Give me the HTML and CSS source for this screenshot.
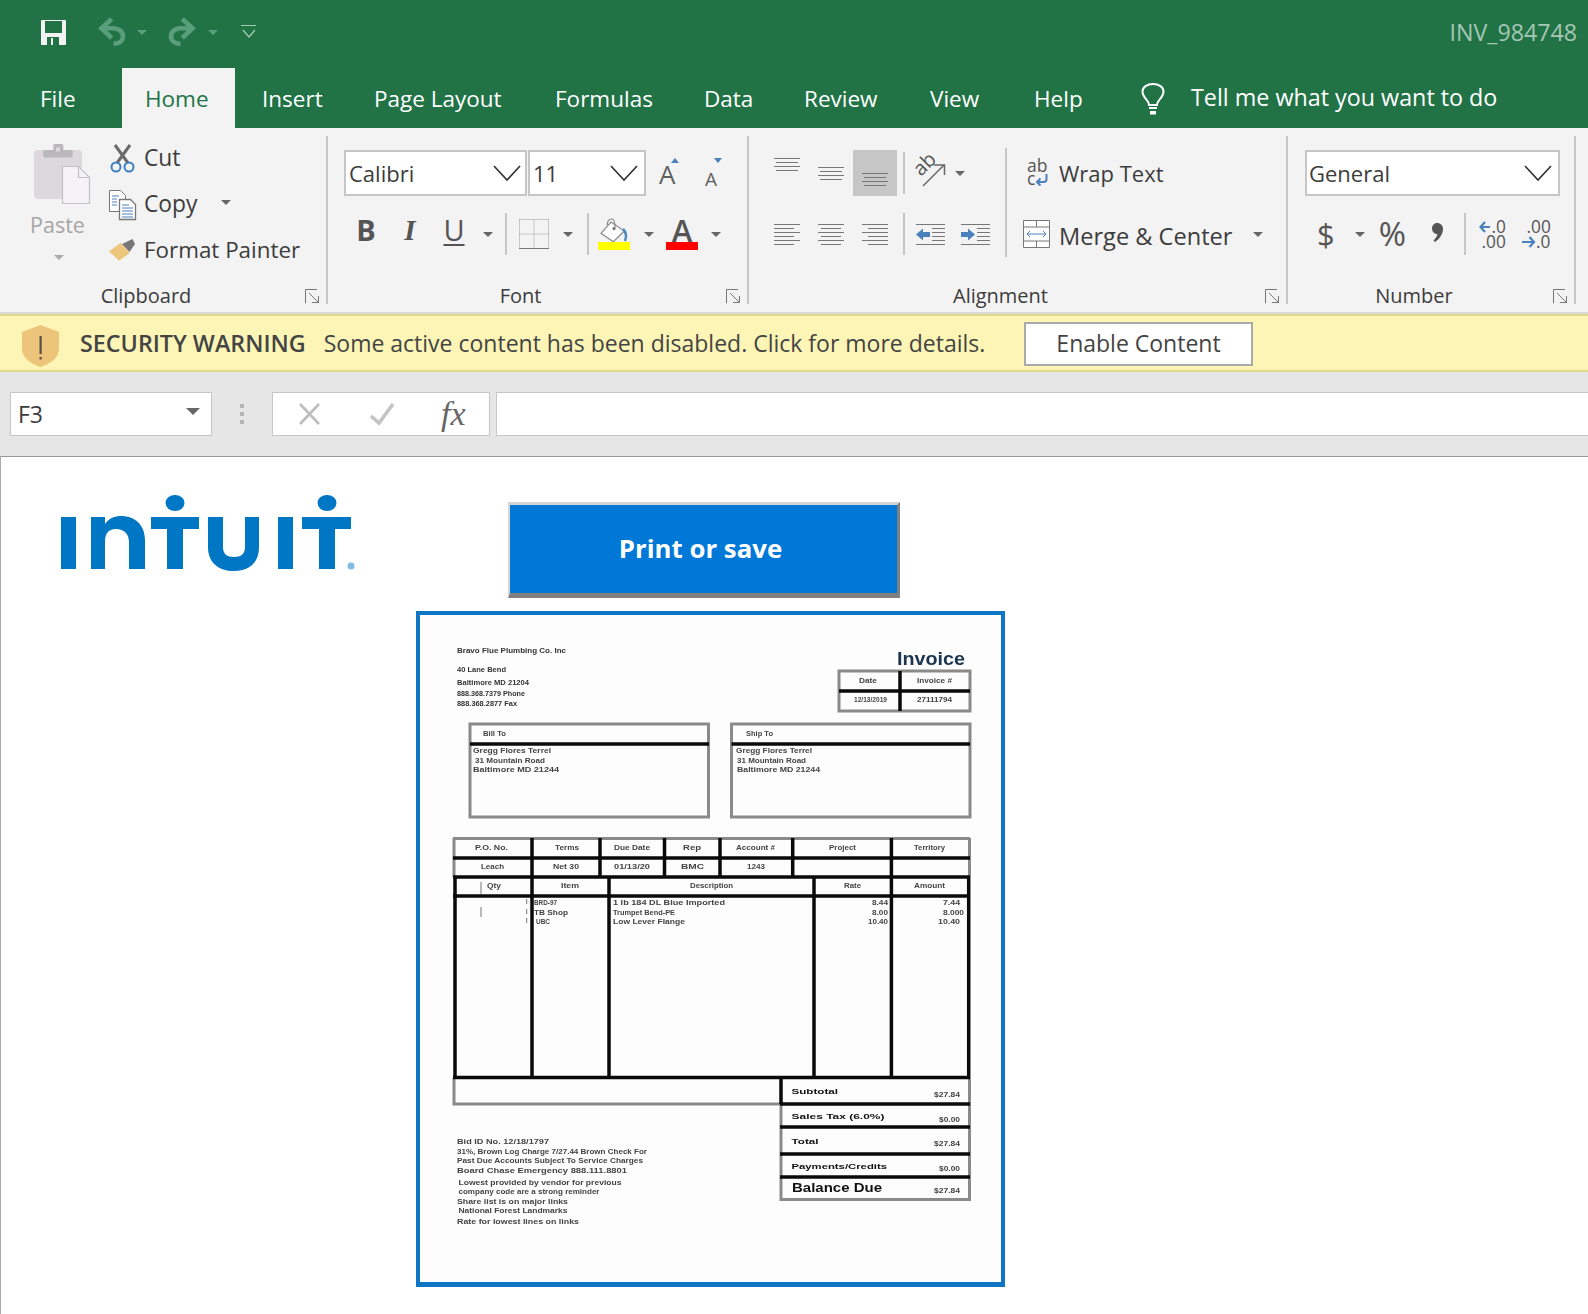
FILE: index.html
```html
<!DOCTYPE html>
<html lang="en">
<head>
<meta charset="utf-8">
<title>INV_984748 - Excel</title>
<link rel="stylesheet" href="styles.css">
</head>
<body>
<header class="titlebar">
  <div class="qat">
    <svg class="ic-save" width="25" height="25" viewBox="0 0 25 25"><path fill="#f3f3f3" d="M1 0h23a1 1 0 0 1 1 1v23a1 1 0 0 1-1 1H1a1 1 0 0 1-1-1V1a1 1 0 0 1 1-1z"/><path fill="#217346" d="M4 1h17v12H4zM6 17h12v8H6z"/><path fill="#f3f3f3" d="M10 18h2v7h-2z"/></svg>
    <svg class="ic-undo" width="32" height="30" viewBox="0 0 32 30"><path fill="none" stroke="#5a9f7c" stroke-width="4.6" d="M15.7 2 5.5 11.3 15.7 21M5.5 11.3H17c6 0 10 3.500 10 8s-4 7.500-9.500 7.500"/></svg>
    <i class="caret caret-qa"></i>
    <svg class="ic-redo" width="32" height="30" viewBox="0 0 32 30"><path fill="none" stroke="#5a9f7c" stroke-width="4.6" transform="matrix(-1 0 0 1 31 0)" d="M15.7 2 5.500 11.300 15.700 21M5.500 11.300H17c6 0 10 3.500 10 8s-4 7.500-9.500 7.500"/></svg>
    <i class="caret caret-qa2"></i>
    <svg class="ic-custom" width="16" height="14" viewBox="0 0 16 14"><path fill="none" stroke="#a3cdb6" stroke-width="1.200" d="M0 .5h15M2 5l6 7 6-7"/></svg>
  </div>
  <div class="docname">INV_984748</div>
</header>
<nav class="tabs">
  <div class="tab tab-file">File</div>
  <div class="tab tab-home">Home</div>
  <div class="tab tab-first">Insert</div>
  <div class="tab">Page Layout</div>
  <div class="tab">Formulas</div>
  <div class="tab">Data</div>
  <div class="tab">Review</div>
  <div class="tab">View</div>
  <div class="tab">Help</div>
  <svg class="ic-bulb" width="24" height="32" viewBox="0 0 24 32"><path fill="none" stroke="#fff" stroke-width="2" d="M8 22c0-5-6.500-7-6.500-13.500C1.500 4 6 1 12 1s10.500 3 10.500 7.500C22.500 15 16 17 16 22z"/><path fill="#fff" d="M8 24h8v2H8zM9 28h6v3.500H9z"/></svg>
  <div class="tellme">Tell me what you want to do</div>
</nav>
<section class="ribbon">
  <div class="group g-clip">
    <div class="gbody clip-body">
      <div class="paste">
        <svg width="56" height="60" viewBox="0 0 56 60"><rect y="6" width="48" height="49" rx="4" fill="#dcd8dc"/><path fill="#bab8ba" d="M9.300 6h10V1.500q0-1.500 1.500-1.500h7q1.500 0 1.500 1.500V6h9.300v6q0 1.600-1.600 1.600H11q-1.700 0-1.700-1.600z"/><rect x="22" y="3.500" width="4" height="4" fill="#dcd8dc"/><path fill="#f5f3f8" stroke="#c2c0c4" stroke-width="1.200" d="M28.500 22.500h16l11 11v26h-27z"/><path fill="none" stroke="#c2c0c4" stroke-width="1.200" d="M44.500 22.500v11h11"/></svg>
        <div class="paste-text">Paste</div>
        <i class="caret caret-light"></i>
      </div>
      <div class="clip-list">
        <div class="clip-row">
          <svg width="28" height="28" viewBox="0 0 28 28"><path fill="none" stroke="#6a6a6a" stroke-width="3" d="M6 0l13 18M21 0 8 18"/><circle cx="7" cy="22" r="4.500" fill="none" stroke="#3f7fbf" stroke-width="2"/><circle cx="20" cy="22" r="4.500" fill="none" stroke="#3f7fbf" stroke-width="2"/></svg>
          <span class="clip-text">Cut</span>
        </div>
        <div class="clip-row">
          <svg width="28" height="30" viewBox="0 0 28 30"><path fill="#fff" stroke="#777" d="M.5.500h11l5 5v16H.500z"/><path fill="#fff" stroke="#777" stroke-width="1.300" d="M10.500 9.500h11l5 5v15h-16z"/><path fill="none" stroke="#4a80bb" d="M3 6h7M3 9h5M3 12h5M3 15h5M13 15h7M13 18h11M13 21h11M13 24h11M13 27h11"/></svg>
          <span class="clip-text">Copy</span><i class="caret caret-copy"></i>
        </div>
        <div class="clip-row">
          <svg width="28" height="24" viewBox="0 0 28 24"><path fill="#ecc67a" d="M0 12.300 11.700 4l9 10L10 21.700z"/><path fill="#777" d="M13 5l10.500-5L26 5l-5.500 8z"/></svg>
          <span class="clip-text clip-fp">Format Painter</span>
        </div>
      </div>
    </div>
    <div class="glabel"><span class="glabel-text">Clipboard</span><svg class="launch" width="14" height="14" viewBox="0 0 14 14"><path fill="none" stroke="#777" d="M.5 14V.5H12M4 4l9 9M13.500 7v6.500H7"/></svg></div>
  </div>

  <div class="group g-font">
    <div class="gbody">
      <div class="row-top">
        <div class="combo combo-font"><span>Calibri</span><svg width="28" height="16" viewBox="0 0 28 16"><path fill="none" stroke="#333" stroke-width="1.700" d="M1 1l13 14L27 1"/></svg></div>
        <div class="combo combo-size"><span>11</span><svg width="28" height="16" viewBox="0 0 28 16"><path fill="none" stroke="#333" stroke-width="1.700" d="M1 1l13 14L27 1"/></svg></div>
        <div class="fsize grow"><span class="a-big">A</span><i class="tri-up"></i></div>
        <div class="fsize shrink"><span class="a-small">A</span><i class="tri-down"></i></div>
      </div>
      <div class="row-bottom font-row">
        <span class="fmt fmt-b">B</span>
        <span class="fmt fmt-i">I</span>
        <span class="fmt fmt-u">U</span>
        <i class="caret c-u"></i>
        <i class="vsep s1"></i>
        <svg class="ic-border" width="30" height="30" viewBox="0 0 30 30"><path fill="none" stroke="#9a9a9a" stroke-dasharray="1 1" d="M.5.500h29M.5.500v29M29.500.500v29M.5 15h29M15 .5v29"/><path fill="none" stroke="#777" d="M0 29.500h30"/></svg>
        <i class="caret c-b"></i>
        <i class="vsep s2"></i>
        <span class="swatch-icon">
          <svg width="32" height="23" viewBox="0 0 32 23"><path fill="#fff" stroke="#8a8a8a" stroke-width="1.200" d="M3 14.300 13 3l13.300 9-11 10.700z"/><path fill="none" stroke="#8a8a8a" stroke-width="1.200" d="M9.300 6C9 1 12 0 14 0s3 2 3 9"/><circle cx="16" cy="9.600" r="1.600" fill="#777"/><path fill="none" stroke="#4a86c0" stroke-width="2.500" d="M25 10c3 3 3.500 8 2 12"/></svg>
          <i class="bar bar-yellow"></i>
        </span>
        <i class="caret c-f"></i>
        <span class="swatch-icon swatch-a">
          <span class="a-color">A</span>
          <i class="bar bar-red"></i>
        </span>
        <i class="caret c-a"></i>
      </div>
    </div>
    <div class="glabel"><span class="glabel-text">Font</span><svg class="launch" width="14" height="14" viewBox="0 0 14 14"><path fill="none" stroke="#777" d="M.5 14V.5H12M4 4l9 9M13.500 7v6.500H7"/></svg></div>
  </div>

  <div class="group g-align">
    <div class="gbody align-body">
      <div class="align-left">
        <div class="row-top">
          <span class="al-btn al-top"><svg width="26" height="13" viewBox="0 0 26 13"><path stroke="#777" d="M0 .5h26M2 4.500h22M0 8.500h26M2 12.500h22"/></svg></span>
          <span class="al-btn al-mid"><svg width="26" height="13" viewBox="0 0 26 13"><path stroke="#777" d="M0 .5h26M2 4.500h22M0 8.500h26M2 12.500h22"/></svg></span>
          <span class="al-btn al-bot"><svg width="26" height="13" viewBox="0 0 26 13"><path stroke="#777" d="M0 .5h26M2 4.500h22M0 8.500h26M2 12.500h22"/></svg></span>
          <i class="vsep s3"></i>
          <svg class="ic-orient" width="32" height="30" viewBox="0 0 32 30"><text class="orient-text" transform="translate(7 19) rotate(-45)">ab</text><path fill="none" stroke="#666" stroke-width="1.500" d="M9 28 30 7M20 7h10.500v10"/></svg>
          <i class="caret c-or"></i>
        </div>
        <div class="row-bottom">
          <span class="al-btn"><svg width="26" height="21" viewBox="0 0 26 21"><path stroke="#777" d="M0 .5h26M0 4.500h20M0 8.500h26M0 12.500h20M0 16.500h26M0 20.500h20"/></svg></span>
          <span class="al-btn"><svg width="26" height="21" viewBox="0 0 26 21"><path stroke="#777" d="M0 .5h26M3 4.500h20M0 8.500h26M3 12.500h20M0 16.500h26M3 20.500h20"/></svg></span>
          <span class="al-btn"><svg width="26" height="21" viewBox="0 0 26 21"><path stroke="#777" d="M0 .5h26M6 4.500h20M0 8.500h26M6 12.500h20M0 16.500h26M6 20.500h20"/></svg></span>
          <i class="vsep s3"></i>
          <svg class="ic-ind1" width="29" height="21" viewBox="0 0 29 21"><path stroke="#777" d="M0 .5h29M16 4.500h13M16 8.500h13M16 12.500h13M16 16.500h13M0 20.500h29"/><path fill="#4a80bb" d="M0 10.500 7 4.500v3.500h7v5H7v3.500z"/></svg>
          <svg class="ic-ind2" width="29" height="21" viewBox="0 0 29 21"><path stroke="#777" d="M0 .5h29M16 4.500h13M16 8.500h13M16 12.500h13M16 16.500h13M0 20.500h29"/><path fill="#4a80bb" d="M14 10.500 7 4.500v3.500H0v5h7v3.500z"/></svg>
        </div>
      </div>
      <i class="vsep tall"></i>
      <div class="align-right">
        <div class="row-top ar-1">
          <svg class="ic-wrap" width="22" height="26" viewBox="0 0 22 26"><text class="wrap-text" x="0" y="12">ab</text><text class="wrap-text" x="0" y="25">c</text><path fill="none" stroke="#4a80bb" stroke-width="2" d="M19.500 14v5q0 3-3 3H10M13.500 18.500 10 22l3.500 3.500"/></svg>
          <span class="cmd">Wrap Text</span>
        </div>
        <div class="row-bottom ar-2">
          <svg class="ic-merge" width="28" height="28" viewBox="0 0 28 28"><path fill="#fff" stroke="#777" d="M.5.500h26v27H.5z"/><path fill="none" stroke="#777" d="M.5 7h26M.5 21h26M13.500.5V7M13.500 21v6.500"/><path fill="none" stroke="#4a80bb" d="M4 14h19M7 11l-3 3 3 3M20 11l3 3-3 3"/></svg>
          <span class="cmd cmd-merge">Merge &amp; Center</span>
          <i class="caret c-mg"></i>
        </div>
      </div>
    </div>
    <div class="glabel"><span class="glabel-text">Alignment</span><svg class="launch" width="14" height="14" viewBox="0 0 14 14"><path fill="none" stroke="#777" d="M.5 14V.5H12M4 4l9 9M13.500 7v6.500H7"/></svg></div>
  </div>

  <div class="group g-num">
    <div class="gbody">
      <div class="row-top">
        <div class="combo combo-num"><span>General</span><svg width="28" height="16" viewBox="0 0 28 16"><path fill="none" stroke="#333" stroke-width="1.700" d="M1 1l13 14L27 1"/></svg></div>
      </div>
      <div class="row-bottom num-row">
        <span class="sym sym-d">$</span>
        <i class="caret c-d"></i>
        <span class="sym sym-p">%</span>
        <svg class="ic-comma" width="11" height="19" viewBox="0 0 11 19"><path fill="#555" d="M5 0c3.500 0 6 2.500 6 6 0 5-3.500 10-8 13l-1.500-1.500c2-2 3.500-4 4-6.500C2.500 11 0 9 0 5.500 0 2.500 2 0 5 0z"/></svg>
        <i class="vsep s4"></i>
        <svg class="ic-dec1" width="29" height="30" viewBox="0 0 29 30"><path fill="none" stroke="#4a80bb" stroke-width="2.200" d="M1.500 8H11M6 3 1.500 8 6 13"/><text class="dec-text" x="12.500" y="14">.0</text><text class="dec-text" x="2.500" y="29">.00</text></svg>
        <svg class="ic-dec2" width="29" height="30" viewBox="0 0 29 30"><text class="dec-text" x="3.500" y="14">.00</text><path fill="none" stroke="#4a80bb" stroke-width="2.200" d="M-1 23h12M6.500 18l4.500 5-4.500 5"/><text class="dec-text" x="13" y="29">.0</text></svg>
      </div>
    </div>
    <div class="glabel"><span class="glabel-text">Number</span><svg class="launch" width="14" height="14" viewBox="0 0 14 14"><path fill="none" stroke="#777" d="M.5 14V.5H12M4 4l9 9M13.500 7v6.500H7"/></svg></div>
  </div>
</section>

<section class="warning">
  <svg class="shield" width="37" height="42" viewBox="0 0 37 42"><path fill="#ecc47a" d="M18.500 0 37 7v17c0 9-9 15-18.500 18C9 39 0 33 0 24V7z"/><path fill="#5a5040" d="M17.500 11h2.200v18h-2.200zM17.500 32h2.200v2.500h-2.200z"/></svg>
  <strong class="warn-title">SECURITY WARNING</strong>
  <span class="warn-msg">Some active content has been disabled. Click for more details.</span>
  <button class="enable">Enable Content</button>
</section>

<section class="formulabar">
  <div class="namebox"><span>F3</span><i class="caret caret-name"></i></div>
  <div class="grip"><i></i><i></i><i></i></div>
  <div class="fbtns">
    <svg width="24" height="22" viewBox="0 0 24 22"><path fill="none" stroke="#bdbdbd" stroke-width="2.600" d="M2 1l19 20M21 1 2 21"/></svg>
    <svg class="ic-check" width="26" height="22" viewBox="0 0 26 22"><path fill="none" stroke="#c4c4c4" stroke-width="3.600" d="M2 13l8 7L24 1"/></svg>
    <span class="fx">fx</span>
  </div>
  <div class="finput"></div>
</section>

<main class="sheet">
  <svg class="logo" width="300" height="80" viewBox="0 0 300 80" aria-label="Intuit">
    <g fill="#0077c5">
      <path d="M0 22h15v52H0zM30 22h14v7c4-6 10-8 16-8 13 0 24 8 24 24v29H68V47c0-8-5-13-13-13s-11 5-11 13v27H30zM90 22h48v12h-16v40h-16V34H90zM147 22h15v30c0 7 4 10 11 10s11-3 11-10V22h14v30c0 16-10 24-25 24s-26-8-26-24zM217 22h15v52h-15zM241 22h49v12h-16v40h-16V34h-17z"/>
      <ellipse cx="114" cy="8" rx="9.500" ry="8"/>
      <ellipse cx="266" cy="8" rx="9.500" ry="8"/>
    </g>
    <circle cx="290" cy="71" r="3.500" fill="#7fbbe2"/>
  </svg>
  <button class="printbtn">Print or save</button>
  <figure class="invoice">
    <svg width="581" height="667" viewBox="420 615 581 667">
      <g class="ln-gray">
        <path d="M839 671h131v40H839zM470 724h238.500v93H470zM731.500 724h238.500v93h-238.500zM453 838.500h517M454 838v39M969.500 838v39"/>
        <path d="M454 1078v26h327M969.500 1078v121.500H781V1104"/>
      </g>
      <g class="ln-black">
        <path d="M900 671v40M839 691h131M470 744h239M731.500 744h238.500M453 858h517M453 877h517M532 838v39M600 838v39M664.500 838v39M720 838v39M792.700 838v39M891.400 838v39"/>
        <path d="M455 877v201M968.700 877v201M453 896h517M453 1077.500h517M532 877v201M609 877v201M814 877v201M891.400 877v201M781 1077v27M780 1104h190M780 1127h190M780 1154h190M780 1177h190"/>
      </g>
      <path class="ln-thin" d="M481 882v12M481 907v10M526.700 899v5M526.700 909v5M526.700 918v5"/>
      <text class="inv-title" x="897" y="665" textLength="68" lengthAdjust="spacingAndGlyphs">Invoice</text>
      <g class="tx-b">
        <text x="457" y="652.500" textLength="109" lengthAdjust="spacingAndGlyphs">Bravo Flue Plumbing Co. Inc</text>
        <text x="457" y="671.500" textLength="49" lengthAdjust="spacingAndGlyphs">40 Lane Bend</text>
        <text x="457" y="684.500" textLength="72" lengthAdjust="spacingAndGlyphs">Baltimore MD 21204</text>
        <text x="457" y="695.500" textLength="68" lengthAdjust="spacingAndGlyphs">888.368.7379 Phone</text>
        <text x="457" y="705.500" textLength="60" lengthAdjust="spacingAndGlyphs">888.368.2877 Fax</text>
      </g>
      <g class="tx">
        <text x="859" y="682.500" textLength="18" lengthAdjust="spacingAndGlyphs">Date</text>
        <text x="917" y="682.500" textLength="35" lengthAdjust="spacingAndGlyphs">Invoice #</text>
        <text x="854" y="701.500" textLength="33" lengthAdjust="spacingAndGlyphs">12/13/2019</text>
        <text x="917" y="701.500" textLength="35" lengthAdjust="spacingAndGlyphs">27111794</text>
        <text x="483" y="736" textLength="23" lengthAdjust="spacingAndGlyphs">Bill To</text>
        <text x="746" y="736" textLength="27" lengthAdjust="spacingAndGlyphs">Ship To</text>
        <text x="473" y="753" textLength="78" lengthAdjust="spacingAndGlyphs">Gregg Flores Terrel</text>
        <text x="475" y="762.500" textLength="70" lengthAdjust="spacingAndGlyphs">31 Mountain Road</text>
        <text x="473" y="771.500" textLength="86" lengthAdjust="spacingAndGlyphs">Baltimore MD 21244</text>
        <text x="736" y="753" textLength="76" lengthAdjust="spacingAndGlyphs">Gregg Flores Terrel</text>
        <text x="737" y="762.500" textLength="69" lengthAdjust="spacingAndGlyphs">31 Mountain Road</text>
        <text x="737" y="771.500" textLength="83" lengthAdjust="spacingAndGlyphs">Baltimore MD 21244</text>
        <text x="475" y="849.500" textLength="33" lengthAdjust="spacingAndGlyphs">P.O. No.</text>
        <text x="555" y="849.500" textLength="24" lengthAdjust="spacingAndGlyphs">Terms</text>
        <text x="614" y="849.500" textLength="36" lengthAdjust="spacingAndGlyphs">Due Date</text>
        <text x="683" y="849.500" textLength="18" lengthAdjust="spacingAndGlyphs">Rep</text>
        <text x="736" y="849.500" textLength="39" lengthAdjust="spacingAndGlyphs">Account #</text>
        <text x="829" y="849.500" textLength="27" lengthAdjust="spacingAndGlyphs">Project</text>
        <text x="914" y="849.500" textLength="31" lengthAdjust="spacingAndGlyphs">Territory</text>
        <text x="481" y="868.500" textLength="23" lengthAdjust="spacingAndGlyphs">Leach</text>
        <text x="553" y="868.500" textLength="26" lengthAdjust="spacingAndGlyphs">Net 30</text>
        <text x="614" y="868.500" textLength="36" lengthAdjust="spacingAndGlyphs">01/13/20</text>
        <text x="681" y="868.500" textLength="23" lengthAdjust="spacingAndGlyphs">BMC</text>
        <text x="747" y="868.500" textLength="18" lengthAdjust="spacingAndGlyphs">1243</text>
        <text x="487" y="888" textLength="14" lengthAdjust="spacingAndGlyphs">Qty</text>
        <text x="561" y="888" textLength="18" lengthAdjust="spacingAndGlyphs">Item</text>
        <text x="690" y="888" textLength="43" lengthAdjust="spacingAndGlyphs">Description</text>
        <text x="844" y="888" textLength="17" lengthAdjust="spacingAndGlyphs">Rate</text>
        <text x="914" y="888" textLength="31" lengthAdjust="spacingAndGlyphs">Amount</text>
        <text x="534" y="904.500" textLength="23" lengthAdjust="spacingAndGlyphs">BRD-97</text>
        <text x="534" y="914.500" textLength="34" lengthAdjust="spacingAndGlyphs">TB Shop</text>
        <text x="536" y="924" textLength="14" lengthAdjust="spacingAndGlyphs">UBC</text>
        <text x="613" y="904.500" textLength="112" lengthAdjust="spacingAndGlyphs">1 lb 184 DL Blue Imported</text>
        <text x="613" y="914.500" textLength="62" lengthAdjust="spacingAndGlyphs">Trumpet Bend-PE</text>
        <text x="613" y="924" textLength="72" lengthAdjust="spacingAndGlyphs">Low Lever Flange</text>
        <text x="872" y="904.500" textLength="16" lengthAdjust="spacingAndGlyphs">8.44</text>
        <text x="872" y="914.500" textLength="16" lengthAdjust="spacingAndGlyphs">8.00</text>
        <text x="868" y="924" textLength="20" lengthAdjust="spacingAndGlyphs">10.40</text>
        <text x="943" y="904.500" textLength="17" lengthAdjust="spacingAndGlyphs">7.44</text>
        <text x="943" y="914.500" textLength="21" lengthAdjust="spacingAndGlyphs">8.000</text>
        <text x="938" y="924" textLength="22" lengthAdjust="spacingAndGlyphs">10.40</text>
        <text x="934" y="1096.500" textLength="26" lengthAdjust="spacingAndGlyphs">$27.84</text>
        <text x="939" y="1121.500" textLength="21" lengthAdjust="spacingAndGlyphs">$0.00</text>
        <text x="934" y="1145.500" textLength="26" lengthAdjust="spacingAndGlyphs">$27.84</text>
        <text x="939" y="1170.500" textLength="21" lengthAdjust="spacingAndGlyphs">$0.00</text>
        <text x="934" y="1193" textLength="26" lengthAdjust="spacingAndGlyphs">$27.84</text>
        <text x="457" y="1144" textLength="92" lengthAdjust="spacingAndGlyphs">Bid ID No. 12/18/1797</text>
        <text x="457" y="1153.500" textLength="190" lengthAdjust="spacingAndGlyphs">31%, Brown Log Charge 7/27.44 Brown Check For</text>
        <text x="457" y="1163" textLength="186" lengthAdjust="spacingAndGlyphs">Past Due Accounts Subject To Service Charges</text>
        <text x="457" y="1172.500" textLength="170" lengthAdjust="spacingAndGlyphs">Board Chase Emergency 888.111.8801</text>
        <text x="458.500" y="1184.500" textLength="163" lengthAdjust="spacingAndGlyphs">Lowest provided by vendor for previous</text>
        <text x="458.500" y="1193.500" textLength="141" lengthAdjust="spacingAndGlyphs">company code are a strong reminder</text>
        <text x="457" y="1203.500" textLength="111" lengthAdjust="spacingAndGlyphs">Share list is on major links</text>
        <text x="458.500" y="1212.500" textLength="109" lengthAdjust="spacingAndGlyphs">National Forest Landmarks</text>
        <text x="457" y="1224" textLength="122" lengthAdjust="spacingAndGlyphs">Rate for lowest lines on links</text>
      </g>
      <g class="tx-d">
        <text x="791.500" y="1094" textLength="46.500" lengthAdjust="spacingAndGlyphs">Subtotal</text>
        <text x="791.500" y="1118.500" textLength="93" lengthAdjust="spacingAndGlyphs">Sales Tax (6.0%)</text>
        <text x="791.500" y="1143.500" textLength="27" lengthAdjust="spacingAndGlyphs">Total</text>
        <text x="791.500" y="1168.500" textLength="95.500" lengthAdjust="spacingAndGlyphs">Payments/Credits</text>
      </g>
      <text class="inv-due" x="792" y="1191.500" textLength="90" lengthAdjust="spacingAndGlyphs">Balance Due</text>
    </svg>
  </figure>
</main>
</body>
</html>
```
FILE: styles.css
```css
* { box-sizing: border-box; }
html, body { margin: 0; padding: 0; }
body {
  width: 1588px;
  height: 1314px;
  overflow: hidden;
  background: #fff;
  font-family: "Open Sans", "Liberation Sans", sans-serif;
  font-size: 22px;
  color: #3c3c3c;
}
i { display: block; font-style: normal; }
svg { display: block; flex: none; overflow: visible; }

/* title */
.titlebar { display: flex; align-items: center; justify-content: space-between; height: 68px; background: #217346; padding: 0 11px 4px 41px; }
.qat { display: flex; align-items: center; }
.ic-undo { margin-left: 30px; }
.ic-redo { margin-left: 20px; }
.ic-custom { margin-left: 23px; }
.caret { width: 0; height: 0; flex: none; border-left: 5px solid transparent; border-right: 5px solid transparent; border-top: 5px solid #666; }
.caret-qa, .caret-qa2 { border-top-color: #5a9f7c; margin-left: 9px; }
.caret-qa2 { margin-left: 9px; }
.docname { color: #a6c7b5; font-size: 23.200px; }

/* tabs */
.tabs { display: grid; grid-template-columns: 122px 113px 139px 181px 149px 100px 126px 104px 107px 50px 1fr; align-items: stretch; height: 60px; background: #217346; color: #fff; font-size: 22.500px; }
.tab { display: flex; align-items: center; padding-top: 1px; }
.tab-file { padding-left: 40px; }
.tab-home { padding-left: 23px; background: #f3f3f3; color: #217346; }
.tab-first { padding-left: 27px; }
.ic-bulb { margin-top: 15px; }
.tellme { display: flex; align-items: center; margin-bottom: 3px; font-size: 23.300px; }

/* ribbon */
.ribbon { display: flex; height: 186px; padding: 8px 0 10px; background: #f3f3f3; border-bottom: 2px solid #d9d9d9; }
.group { display: flex; flex-direction: column; height: 168px; border-right: 2px solid #c6c6c6; }
.g-clip { width: 328px; }
.g-font { width: 421px; }
.g-align { width: 539px; }
.g-num { width: 288px; }
.gbody { height: 148px; }
.glabel { display: flex; height: 20px; }
.glabel-text { flex: 1; text-align: center; font-size: 20px; line-height: 24px; }
.launch { margin: 5px 7px 0 13px; }

.clip-body { display: flex; }
.paste { width: 58px; margin-left: 34px; padding-top: 8px; display: flex; flex-direction: column; }
.paste-text { color: #a6a6a6; font-size: 21.500px; line-height: 30px; margin: 6px 0 0 -4px; }
.caret-light { border-top-color: #aaa; margin: 15px 0 0 20px; }
.clip-list { margin-left: 17px; }
.clip-row { display: flex; align-items: center; height: 46px; }
.clip-row svg { margin-right: 7px; width: 28px; }
.clip-text { font-size: 22.800px; margin-top: -3px; }
.clip-fp { font-size: 22.400px; }
.caret-copy { margin: 0 0 6px 24px; }

.row-top { display: flex; align-items: center; height: 46px; margin-top: 14px; }
.row-bottom { display: flex; align-items: center; height: 42px; margin-top: 17px; }
.g-font .gbody { padding-left: 16px; }
.g-num .gbody { padding-left: 17px; }
.combo { display: flex; align-items: center; justify-content: space-between; height: 46px; background: #fff; border: 2px solid #c6c6c6; padding: 0 6px 0 3px; }
.combo-font { width: 183px; padding-right: 4px; }
.combo-size { width: 118px; margin-left: 1px; }
.combo-num { width: 255px; padding-left: 2px; }
.fsize { display: flex; align-items: flex-start; height: 46px; }
.grow { margin-left: 13px; width: 36px; }
.shrink { margin-left: 10px; width: 26px; }
.a-big { color: #5f5f5f; font-size: 26px; line-height: 36px; margin-top: 6px; }
.a-small { color: #5f5f5f; font-size: 19px; line-height: 30px; margin-top: 14px; }
.tri-up { width: 0; height: 0; margin: 8px 0 0 -4px; border-left: 4px solid transparent; border-right: 4px solid transparent; border-bottom: 5px solid #4a80bb; }
.tri-down { width: 0; height: 0; margin: 8px 0 0 -3px; border-left: 4px solid transparent; border-right: 4px solid transparent; border-top: 5px solid #4a80bb; }
.fmt { display: block; width: 22px; text-align: center; color: #555; font-size: 29px; line-height: 42px; margin-top: -8px; }
.fmt-b { margin-left: 11px; font-weight: 700; }
.fmt-i { margin-left: 22px; font-family: "Liberation Serif", serif; font-style: italic; font-weight: 700; }
.fmt-u { margin-left: 22px; text-decoration: underline; text-decoration-thickness: 2px; text-underline-offset: 3px; }
.vsep { width: 2px; height: 42px; background: #c6c6c6; flex: none; }
.c-u { margin-left: 18px; }
.s1 { margin-left: 12px; }
.ic-border { margin-left: 12px; }
.c-b { margin-left: 14px; }
.s2 { margin-left: 14px; }
.swatch-icon { display: flex; flex-direction: column; width: 32px; height: 31px; margin-left: 9px; }
.swatch-a { margin-left: 12px; }
.a-color { display: block; height: 23px; color: #555; font-size: 32px; font-weight: 600; line-height: 23px; text-align: center; }
.bar { display: block; height: 8px; width: 32px; }
.bar-yellow { background: #ffff00; }
.bar-red { background: #ff0000; }
.c-f { margin-left: 14px; }
.c-a { margin-left: 13px; }

.align-body { display: flex; }
.align-left { width: 240px; margin-left: 16px; }
.al-btn { display: flex; align-items: center; justify-content: center; width: 44px; height: 42px; flex: none; }
.row-top .al-btn { height: 46px; }
.al-top { align-items: flex-start; padding-top: 8px; }
.al-bot { align-items: flex-end; padding-bottom: 10px; background: #c6c6c6; }
.s3 { margin-left: 6px; }
.ic-orient { margin-left: 9px; }
.orient-text { font-size: 20px; fill: #555; font-family: "Open Sans", sans-serif; }
.c-or { margin-left: 9px; }
.ic-ind1 { margin-left: 11px; }
.ic-ind2 { margin-left: 16px; }
.tall { height: 109px; margin-top: 12px; }
.ar-1 { padding-left: 20px; }
.ar-2 { padding-left: 16px; }
.ic-wrap { margin-right: 10px; }
.wrap-text { font-size: 17.500px; fill: #555; font-family: "Open Sans", sans-serif; }
.ic-merge { margin-right: 8px; }
.cmd { white-space: nowrap; }
.cmd-merge { font-size: 23.600px; padding-top: 3px; }
.c-mg { margin-left: 20px; }
.sym { color: #555; line-height: 42px; }
.sym-d { margin-left: 12px; font-size: 31px; }
.c-d { margin-left: 20px; }
.sym-p { margin-left: 14px; font-size: 33px; }
.ic-comma { margin-left: 26px; margin-top: -4px; }
.s4 { margin-left: 21px; }
.ic-dec1 { margin-left: 13px; }
.ic-dec2 { margin-left: 15px; }
.dec-text { font-size: 17.300px; fill: #555; font-family: "Open Sans", sans-serif; }

/* warning */
.warning { display: flex; align-items: center; height: 58px; background: #fcf5b5; border-top: 2px solid #e0d98a; border-bottom: 2px solid #e0d98a; padding-left: 22px; font-size: 23px; }
.shield { margin-top: 6px; }
.warn-title { margin-left: 21px; color: #444; font-size: 23.300px; font-weight: 600; white-space: nowrap; }
.warn-msg { margin-left: 18px; color: #444; white-space: nowrap; }
.enable { margin-left: auto; margin-right: 335px; width: 229px; height: 44px; margin-top: 2px; background: #fff; border: 2px solid #aaa; border-radius: 0; color: #444; font: inherit; padding: 0 0 2px 0; }

/* formula */
.formulabar { display: flex; height: 84px; padding: 20px 0 0 10px; background: #e6e6e6; }
.namebox { display: flex; align-items: center; justify-content: space-between; width: 202px; height: 44px; background: #fff; border: 1px solid #c6c6c6; padding: 0 11px 0 7px; font-size: 23px; }
.caret-name { border-left-width: 7px; border-right-width: 7px; border-top-width: 7px; border-top-color: #666; margin-bottom: 6px; }
.grip { display: flex; flex-direction: column; justify-content: space-between; width: 4px; height: 20px; margin: 12px 28px 0 28px; }
.grip i { width: 4px; height: 4px; background: #b4b4b4; }
.fbtns { display: flex; align-items: center; width: 218px; height: 44px; background: #fff; border: 1px solid #c6c6c6; padding-left: 25px; }
.ic-check { margin-left: 47px; }
.fx { margin-left: 46px; font-family: "Liberation Serif", serif; font-style: italic; font-size: 34px; color: #666; line-height: 40px; }
.finput { flex: 1; height: 44px; margin: 0 -2px 0 6px; background: #fff; border: 1px solid #c6c6c6; }

/* sheet */
.sheet { position: relative; height: 858px; background: #fff; border-top: 1px solid #999; border-left: 1px solid #aaa; }
.logo { position: absolute; left: 60px; top: 38px; filter: blur(.4px); }
.printbtn { position: absolute; left: 507px; top: 45px; width: 392px; height: 96px; background: #0078d7; border-style: solid; border-width: 3px 3px 5px 2px; border-color: #d5d5d5 #808080 #808080 #d5d5d5; border-radius: 0; color: #fff; font: 700 25.800px "Open Sans", sans-serif; padding: 0 6px 3px 0; }
.invoice { position: absolute; left: 415px; top: 154px; width: 589px; height: 676px; margin: 0; border: 4px solid #0f76c5; border-bottom-width: 5px; background: #fdfdfd; }
.ln-gray { fill: none; stroke: #8a8a8a; stroke-width: 3; }
.ln-black { fill: none; stroke: #0a0a0a; stroke-width: 3.500; }
.ln-thin { fill: none; stroke: #777; stroke-width: 1; }
.tx, .tx-b, .tx-d { font-family: "Liberation Sans", sans-serif; font-size: 7px; font-weight: 700; filter: blur(.45px); }
.tx { fill: #444; }
.tx-b { fill: #333; }
.tx-d { fill: #111; font-size: 8px; }
.inv-title { font: 700 19px "Liberation Sans", sans-serif; fill: #1b3550; filter: blur(.3px); }
.inv-due { font: 700 13.500px "Liberation Sans", sans-serif; fill: #111; filter: blur(.3px); }
```
